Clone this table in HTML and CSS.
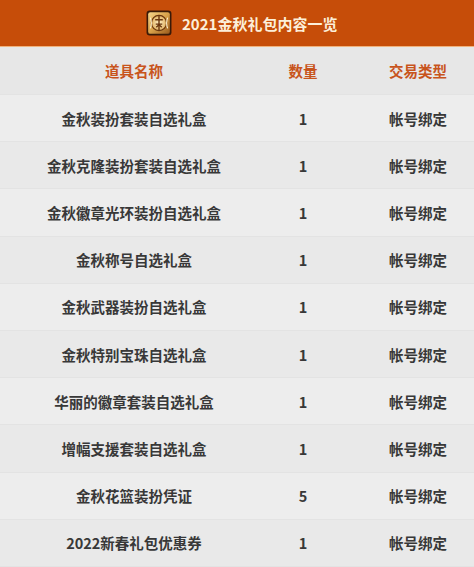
FILE: index.html
```html
<!DOCTYPE html>
<html>
<head>
<meta charset="utf-8">
<link rel="stylesheet" href="styles.css">
</head>
<body>
<div class="page">
  <div class="titlebar">
    <svg class="logo" width="26" height="26" viewBox="0 0 24 24">
      <defs>
        <linearGradient id="g" x1="0" y1="0" x2="1" y2="1">
          <stop offset="0" stop-color="#f6d58a"/>
          <stop offset="0.5" stop-color="#d9a24a"/>
          <stop offset="1" stop-color="#9a5a1c"/>
        </linearGradient>
        <radialGradient id="c" cx="0.5" cy="0.5" r="0.5">
          <stop offset="0" stop-color="#fff1c8"/>
          <stop offset="1" stop-color="#e0b060"/>
        </radialGradient>
      </defs>
      <rect x="0.5" y="0.5" width="23" height="23" rx="3" fill="#3a1a08"/>
      <rect x="2" y="2" width="20" height="20" rx="2" fill="url(#g)"/>
      <circle cx="12" cy="12" r="7" fill="url(#c)" stroke="#6a360e" stroke-width="1.2"/>
      <path d="M12 5.5 V18.5 M8.5 9 H15.5 M9 13 H15 M9.5 16 L12 13.5 L14.5 16" stroke="#6a360e" stroke-width="1.3" fill="none"/>
      <path d="M4 7 Q6 12 4 17 M20 7 Q18 12 20 17" stroke="#fff3d0" stroke-width="1" fill="none"/>
    </svg>
    <span class="title">2021金秋礼包内容一览</span>
  </div>
  <div class="table">
    <div class="row head">
      <div class="c1">道具名称</div><div class="c2">数量</div><div class="c3">交易类型</div>
    </div>
    <div class="row"><div class="c1">金秋装扮套装自选礼盒</div><div class="c2">1</div><div class="c3">帐号绑定</div></div>
    <div class="row"><div class="c1">金秋克隆装扮套装自选礼盒</div><div class="c2">1</div><div class="c3">帐号绑定</div></div>
    <div class="row"><div class="c1">金秋徽章光环装扮自选礼盒</div><div class="c2">1</div><div class="c3">帐号绑定</div></div>
    <div class="row"><div class="c1">金秋称号自选礼盒</div><div class="c2">1</div><div class="c3">帐号绑定</div></div>
    <div class="row"><div class="c1">金秋武器装扮自选礼盒</div><div class="c2">1</div><div class="c3">帐号绑定</div></div>
    <div class="row"><div class="c1">金秋特别宝珠自选礼盒</div><div class="c2">1</div><div class="c3">帐号绑定</div></div>
    <div class="row"><div class="c1">华丽的徽章套装自选礼盒</div><div class="c2">1</div><div class="c3">帐号绑定</div></div>
    <div class="row"><div class="c1">增幅支援套装自选礼盒</div><div class="c2">1</div><div class="c3">帐号绑定</div></div>
    <div class="row"><div class="c1">金秋花篮装扮凭证</div><div class="c2">5</div><div class="c3">帐号绑定</div></div>
    <div class="row"><div class="c1">2022新春礼包优惠券</div><div class="c2">1</div><div class="c3">帐号绑定</div></div>
  </div>
</div>
</body>
</html>
```
FILE: styles.css
```css
html, body {
  margin: 0;
  padding: 0;
  background: #ebebeb;
}
.page {
  width: 474px;
  font-family: "Noto Sans CJK SC", "Noto Sans", sans-serif;
  font-weight: 700;
}
.titlebar {
  height: 47px;
  background: #c64d09;
  border-bottom: 1px solid #f0b27c;
  box-sizing: border-box;
  display: flex;
  align-items: center;
  padding-left: 146px;
  gap: 10px;
}
.logo {
  display: block;
}
.title {
  color: #fcefd9;
  font-size: 15px;
  line-height: 1;
}
.table {
  display: flex;
  flex-direction: column;
}
.row {
  height: 47.2px;
  display: grid;
  grid-template-columns: 268px 70px 136px;
  align-items: center;
  font-size: 14.5px;
  color: #383838;
  background: #ededed;
  border-bottom: 1px solid #e3e3e3;
  box-sizing: border-box;
}
.row:nth-child(odd) {
  background: #e9e9e9;
}
.row.head {
  background: #e7e7e7;
  color: #c8541c;
  height: 48px;
}
.c1, .c2 {
  text-align: center;
}
.c3 {
  text-align: center;
  padding-left: 24px;
}
```
